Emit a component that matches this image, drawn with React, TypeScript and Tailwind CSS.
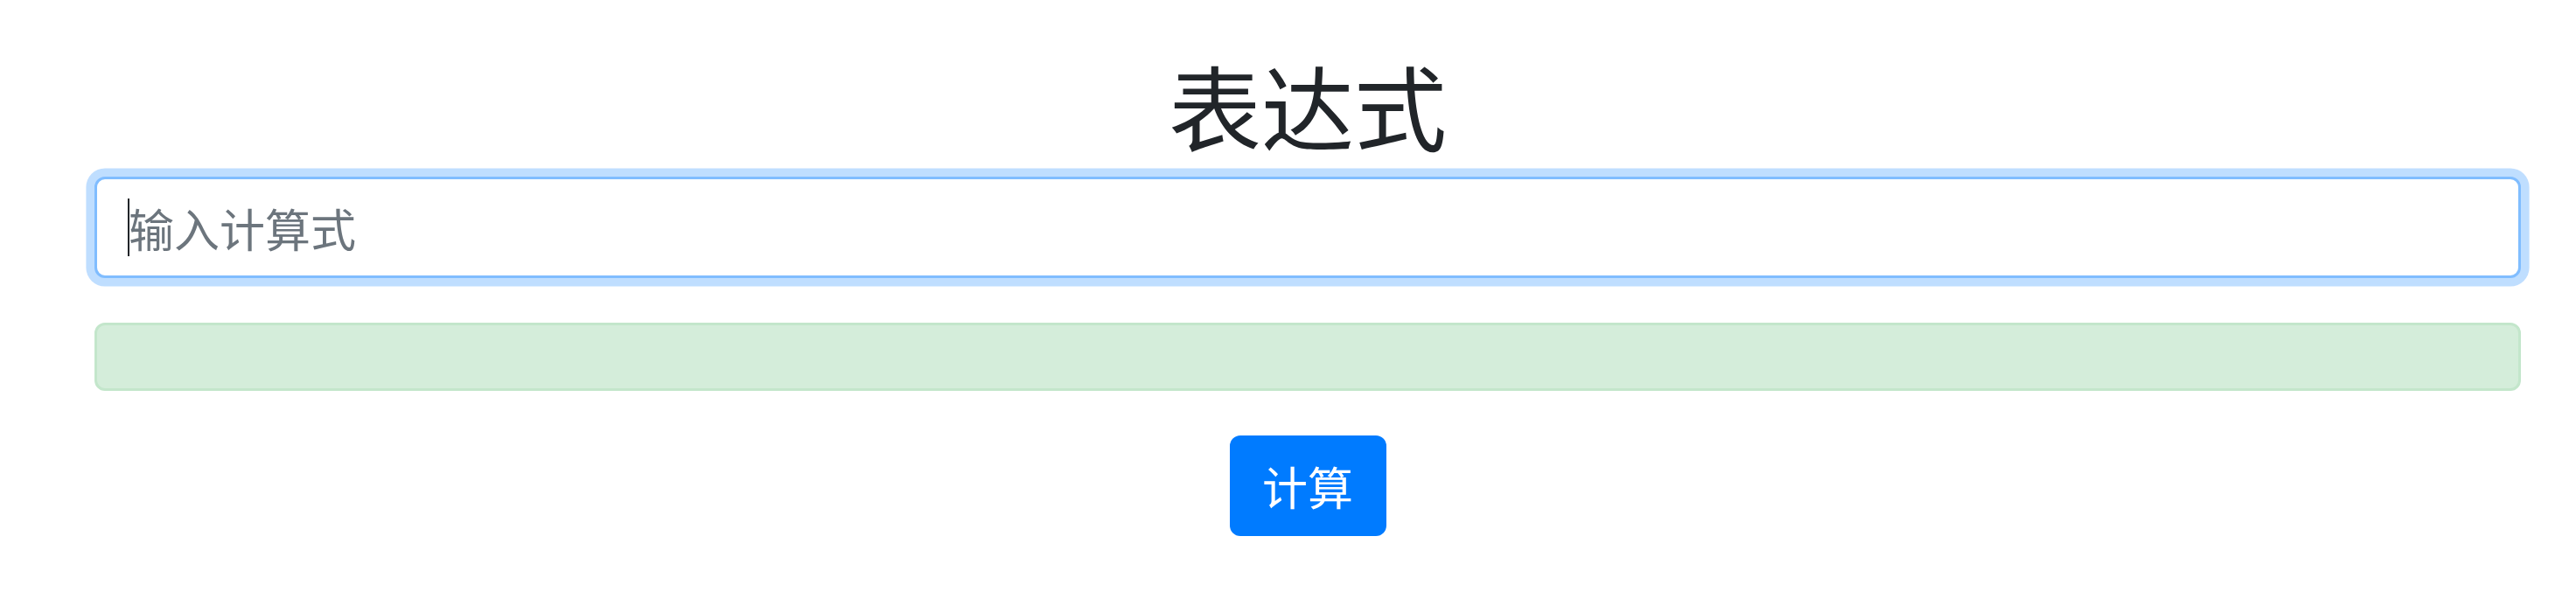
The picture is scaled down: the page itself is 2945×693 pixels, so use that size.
import React from "react";

export default function App() {
  const font = { fontFamily: '"Noto Sans CJK SC", "Noto Sans", sans-serif' };
  return (
    <div className="min-h-[693px] bg-white pl-[108px] pr-[63px] pt-[59px]" style={font}>
      <h1 className="m-0 mb-[23px] text-center text-[106px] font-normal leading-[120px] text-[#212529]">表达式</h1>
      <div className="relative">
        <input
          type="text"
          placeholder="输入计算式"
          style={font}
          className="block h-[116px] w-full rounded-[12px] border-[3px] border-[#80bdff] bg-white px-[36px] text-[52px] text-[#495057] outline-none shadow-[0_0_0_9.6px_rgba(0,123,255,0.25)] placeholder:text-[#6c757d]"
        />
        <span className="pointer-events-none absolute left-[38px] top-[25px] h-[66px] w-[2px] bg-[#212529]" />
      </div>
      <div className="mt-[51px] h-[78px] rounded-[12px] border-[3px] border-[#c3e6cb] bg-[#d4edda]" />
      <div className="mt-[51px] flex justify-center">
        <button className="h-[115px] w-[179px] rounded-[12px] bg-[#007bff] text-[52px] leading-none text-white">计算</button>
      </div>
    </div>
  );
}
